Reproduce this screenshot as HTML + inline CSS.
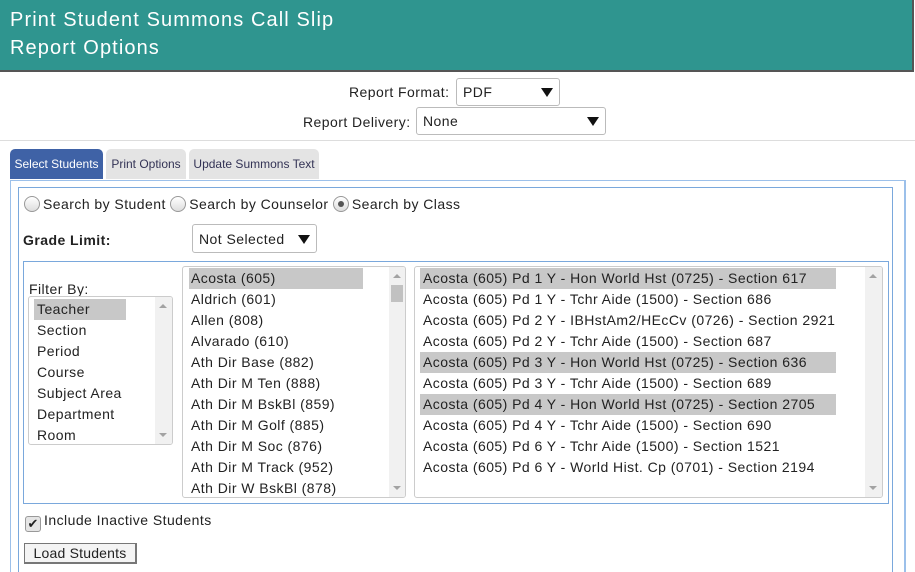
<!DOCTYPE html>
<html style="overflow:hidden"><head><style>
*{box-sizing:border-box}
html,body{overflow:hidden;height:572px}
body{margin:0;width:915px;background:#fff;font-family:"Liberation Sans",sans-serif;font-size:14px;color:#222;position:relative;letter-spacing:0.45px}
.a{position:absolute}
.hdr{left:0;top:0;width:914px;height:72px;background:#2f958f;border-right:2px solid #555;border-bottom:2px solid #555;color:#fff;font-size:20px;padding:6px 0 0 10px;line-height:28px;letter-spacing:1.1px}
.sel{border:1px solid #bbb;border-radius:3px;background:#fff;padding:0 6px;line-height:26px}
.tri{position:absolute;right:6px;top:9px;width:0;height:0;border-left:6px solid transparent;border-right:6px solid transparent;border-top:9px solid #111}
.tab{top:149px;height:30px;border-radius:5px 5px 0 0;background:#e4e4e4;color:#335;font-size:12px;line-height:30px;text-align:center;letter-spacing:0}
.box{border:1px solid #7aa8dc}
.list{border:1px solid #ccc;border-radius:3px;background:#fff;overflow:hidden}
.list div{height:21px;line-height:21px;padding-left:6px;white-space:nowrap}
.hl{background:#c8c8c8}
.sb{position:absolute;right:0;top:0;bottom:0;width:16px;background:#f1f1f1}
.up,.dn{position:absolute;left:4px;width:0;height:0;border-left:4px solid transparent;border-right:4px solid transparent}
.up{top:7px;border-bottom:4px solid #a3a3a3}
.dn{bottom:7px;border-top:4px solid #a3a3a3}
.radio{display:inline-block;width:16px;height:16px;border:1px solid #999;border-radius:50%;background:linear-gradient(#fff,#ddd);vertical-align:-3px;margin-right:3px;position:relative}
</style></head><body>
<div class="a hdr">Print Student Summons Call Slip<br>Report Options</div>
<div class="a" style="left:349px;top:83px;line-height:18px">Report Format:</div>
<div class="a sel" style="left:456px;top:78px;width:104px;height:28px">PDF<span class="tri"></span></div>
<div class="a" style="left:303px;top:113px;line-height:18px">Report Delivery:</div>
<div class="a sel" style="left:416px;top:107px;width:190px;height:28px">None<span class="tri"></span></div>
<div class="a" style="left:0;top:140px;width:915px;height:1px;background:#ddd"></div>
<div class="a tab" style="left:10px;width:93px;background:#3f62a6;color:#fff">Select Students</div>
<div class="a tab" style="left:106px;width:80px">Print Options</div>
<div class="a tab" style="left:189px;width:130px">Update Summons Text</div>
<div class="a" style="left:10px;top:180px;width:895px;height:400px;border:1px solid #9cc0ea"></div>
<div class="a" style="left:905px;top:180px;width:3px;height:400px;border-left:1px solid #9cc0ea"></div>
<div class="a box" style="left:18px;top:187px;width:875px;height:400px"></div>
<div class="a" style="left:24px;top:194px;line-height:20px"><span class="radio"></span>Search by Student <span class="radio"></span>Search by Counselor <span class="radio"><span class="a" style="left:4px;top:4px;width:6px;height:6px;border-radius:50%;background:#555"></span></span>Search by Class</div>
<div class="a" style="left:23px;top:231px;font-weight:bold;line-height:18px">Grade Limit:</div>
<div class="a sel" style="left:192px;top:224px;width:125px;height:29px;line-height:28px">Not Selected<span class="tri" style="top:10px"></span></div>
<div class="a box" style="left:23px;top:261px;width:866px;height:243px"></div>
<div class="a" style="left:29px;top:281px;line-height:16px">Filter By:</div>
<div class="a list" style="left:28px;top:296px;width:145px;height:149px;padding-top:2px"><span class="sb" style="width:17px"><span class="up"></span><span class="dn"></span></span>
<div class="hl" style="width:92px;margin-left:5px;padding-left:3px">Teacher</div><div style="padding-left:8px">Section</div><div style="padding-left:8px">Period</div><div style="padding-left:8px">Course</div><div style="padding-left:8px">Subject Area</div><div style="padding-left:8px">Department</div><div style="padding-left:8px">Room</div></div>
<div class="a list" style="left:182px;top:266px;width:224px;height:232px;padding-top:1px"><span class="sb"><span class="up"></span><span class="dn"></span><span class="a" style="left:2px;top:18px;width:12px;height:17px;background:#c1c1c1"></span></span>
<div class="hl" style="width:174px;margin-left:6px;padding-left:2px">Acosta (605)</div><div style="padding-left:8px">Aldrich (601)</div><div style="padding-left:8px">Allen (808)</div><div style="padding-left:8px">Alvarado (610)</div><div style="padding-left:8px">Ath Dir Base (882)</div><div style="padding-left:8px">Ath Dir M Ten (888)</div><div style="padding-left:8px">Ath Dir M BskBl (859)</div><div style="padding-left:8px">Ath Dir M Golf (885)</div><div style="padding-left:8px">Ath Dir M Soc (876)</div><div style="padding-left:8px">Ath Dir M Track (952)</div><div style="padding-left:8px">Ath Dir W BskBl (878)</div></div>
<div class="a list" style="left:414px;top:266px;width:469px;height:232px;padding-top:1px"><span class="sb" style="width:17px"><span class="up"></span><span class="dn"></span></span>
<div class="hl" style="width:416px;margin-left:5px;padding-left:3px">Acosta (605) Pd 1 Y - Hon World Hst (0725) - Section 617</div>
<div style="padding-left:8px">Acosta (605) Pd 1 Y - Tchr Aide (1500) - Section 686</div>
<div style="padding-left:8px">Acosta (605) Pd 2 Y - IBHstAm2/HEcCv (0726) - Section 2921</div>
<div style="padding-left:8px">Acosta (605) Pd 2 Y - Tchr Aide (1500) - Section 687</div>
<div class="hl" style="width:416px;margin-left:5px;padding-left:3px">Acosta (605) Pd 3 Y - Hon World Hst (0725) - Section 636</div>
<div style="padding-left:8px">Acosta (605) Pd 3 Y - Tchr Aide (1500) - Section 689</div>
<div class="hl" style="width:416px;margin-left:5px;padding-left:3px">Acosta (605) Pd 4 Y - Hon World Hst (0725) - Section 2705</div>
<div style="padding-left:8px">Acosta (605) Pd 4 Y - Tchr Aide (1500) - Section 690</div>
<div style="padding-left:8px">Acosta (605) Pd 6 Y - Tchr Aide (1500) - Section 1521</div>
<div style="padding-left:8px">Acosta (605) Pd 6 Y - World Hist. Cp (0701) - Section 2194</div></div>
<div class="a" style="left:25px;top:512px;line-height:16px"><span style="display:inline-block;width:16px;height:16px;border:1px solid #999;border-radius:3px;background:#e5e5e5;vertical-align:-3px;text-align:center;font-size:13px;line-height:14px;margin-right:3px;letter-spacing:0">✔</span>Include Inactive Students</div>
<div class="a" style="left:24px;top:543px;width:113px;height:21px;border:1px solid #777;border-right-width:2px;border-bottom-width:2px;background:#f4f4f4;line-height:18px;text-align:center;letter-spacing:0.2px">Load Students</div>
</body></html>
